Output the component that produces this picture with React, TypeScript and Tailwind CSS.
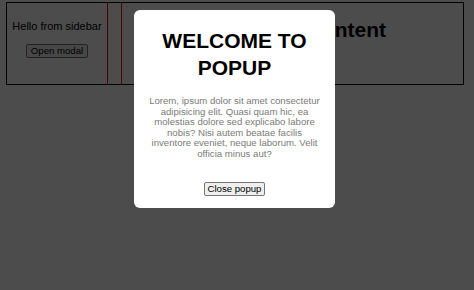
import { useState } from "react";

export default function App() {
  const [open, setOpen] = useState(true);

  return (
    <div className="relative h-[290px] w-[474px] overflow-hidden bg-white font-['Liberation_Sans',Arial,sans-serif] text-black">
      {/* Page behind the popup */}
      <div className="ml-[6px] mt-[2px] flex h-[83px] w-[458px] border border-black">
        <aside className="flex w-[101px] flex-col items-center border-r border-red-600 pt-[16px]">
          <p className="text-[11px] leading-[14px]">Hello from sidebar</p>
          <button
            type="button"
            onClick={() => setOpen(true)}
            className="mt-[11px] h-[14px] rounded-[2px] border border-[#767676] bg-[#efefef] px-[4px] text-[9.6px] leading-[12px]"
          >
            Open modal
          </button>
        </aside>
        <main className="ml-[13px] flex-1 border-l border-red-600 pl-[131px] pt-[14px]">
          <h1 className="text-[21px] font-bold leading-[26px]">Main Content</h1>
        </main>
      </div>

      {/* Popup */}
      {open && (
        <div className="absolute inset-0 bg-black/70">
          <div className="absolute left-[134px] top-[10px] flex h-[198px] w-[201px] flex-col items-center rounded-[6px] bg-white px-[14px] pt-[17px] text-center">
            <h2 className="text-[21px] font-bold leading-[27px]">
              WELCOME TO
              <br />
              POPUP
            </h2>
            <p className="mt-[15px] text-[9.6px] leading-[10.6px] text-[#7a7a7a]">
              Lorem, ipsum dolor sit amet consectetur adipisicing elit. Quasi
              quam hic, ea molestias dolore sed explicabo labore nobis? Nisi
              autem beatae facilis inventore eveniet, neque laborum. Velit
              officia minus aut?
            </p>
            <button
              type="button"
              onClick={() => setOpen(false)}
              className="mt-[22px] h-[14px] rounded-[2px] border border-[#767676] bg-[#efefef] px-[3px] text-[9.6px] leading-[12px]"
            >
              Close popup
            </button>
          </div>
        </div>
      )}
    </div>
  );
}
